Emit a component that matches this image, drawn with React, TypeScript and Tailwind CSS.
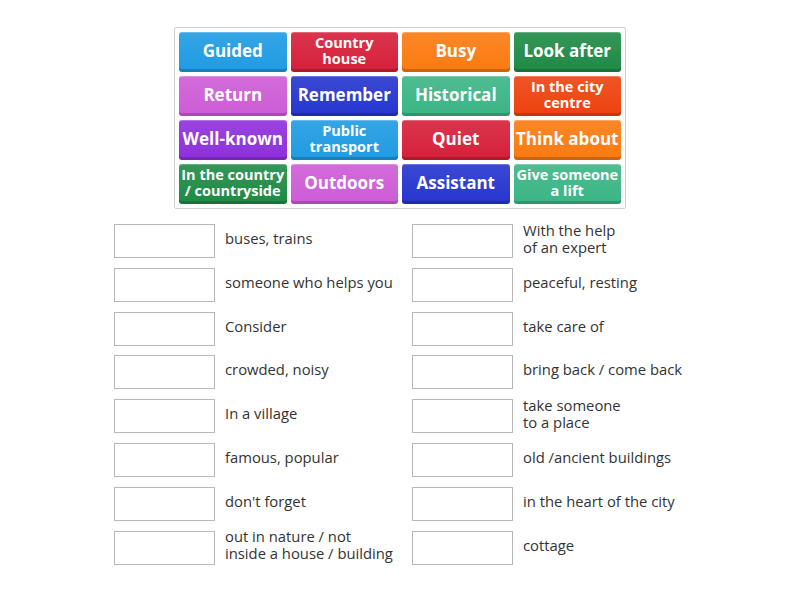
import React from "react";

type Tile = { label: string[]; bg: string };

const tiles: Tile[] = [
  { label: ["Guided"], bg: "bg-[#1f9be3]" },
  { label: ["Country", "house"], bg: "bg-[#d61f3a]" },
  { label: ["Busy"], bg: "bg-[#fb7a10]" },
  { label: ["Look after"], bg: "bg-[#1e8a46]" },
  { label: ["Return"], bg: "bg-[#cd5cd6]" },
  { label: ["Remember"], bg: "bg-[#2535cf]" },
  { label: ["Historical"], bg: "bg-[#3bb585]" },
  { label: ["In the city", "centre"], bg: "bg-[#ee420f]" },
  { label: ["Well-known"], bg: "bg-[#8e2fdc]" },
  { label: ["Public", "transport"], bg: "bg-[#1f9be3]" },
  { label: ["Quiet"], bg: "bg-[#d61f3a]" },
  { label: ["Think about"], bg: "bg-[#fb7a10]" },
  { label: ["In the country", "/ countryside"], bg: "bg-[#1e8a46]" },
  { label: ["Outdoors"], bg: "bg-[#cd5cd6]" },
  { label: ["Assistant"], bg: "bg-[#2535cf]" },
  { label: ["Give someone", "a lift"], bg: "bg-[#3bb585]" },
];

const left: string[][] = [
  ["buses, trains"],
  ["someone who helps you"],
  ["Consider"],
  ["crowded, noisy"],
  ["In a village"],
  ["famous, popular"],
  ["don't forget"],
  ["out in nature / not", "inside a house / building"],
];

const right: string[][] = [
  ["With the help", "of an expert"],
  ["peaceful, resting"],
  ["take care of"],
  ["bring back / come back"],
  ["take someone", "to a place"],
  ["old /ancient buildings"],
  ["in the heart of the city"],
  ["cottage"],
];

function TileBox({ t }: { t: Tile }) {
  const two = t.label.length > 1;
  return (
    <div
      className={`${t.bg} relative h-[40px] rounded-[3px] flex flex-col items-center justify-center text-white font-bold text-center overflow-hidden shadow-[inset_0_-3px_0_rgba(0,0,0,0.18),inset_0_1px_0_rgba(255,255,255,0.25)] ${
        two ? "text-[14.5px] leading-[16px] pb-[3px]" : "text-[17px] leading-[20px] pb-[2px]"
      }`}
    >
      <div className="absolute inset-0 bg-gradient-to-b from-white/10 to-transparent pointer-events-none" />
      {t.label.map((l, i) => (
        <span key={i} className="relative whitespace-nowrap">
          {l}
        </span>
      ))}
    </div>
  );
}

function Row({ text }: { text: string[] }) {
  return (
    <div className="flex items-center h-[34px]">
      <div className="w-[101px] h-[34px] border border-[#b8b8b8] bg-white shrink-0" />
      <div className="ml-[10px] pb-[5px] text-[14.8px] leading-[17px] text-[#333]">
        {text.map((l, i) => (
          <div key={i} className="whitespace-nowrap">
            {l}
          </div>
        ))}
      </div>
    </div>
  );
}

export default function App() {
  return (
    <div
      className="w-[800px] h-[600px] bg-white relative"
      style={{ fontFamily: '"Open Sans", "Noto Sans", sans-serif' }}
    >
      <div className="pt-[27px] flex justify-center">
        <div className="w-[452px] border border-[#cfcfcf] rounded-[2px] p-[4px] grid grid-cols-4 gap-[4px]">
          {tiles.map((t, i) => (
            <TileBox key={i} t={t} />
          ))}
        </div>
      </div>
      <div className="mt-[15px] pl-[114px] flex gap-[97px]">
        <div className="flex flex-col gap-[9.8px] w-[201px]">
          {left.map((t, i) => (
            <Row key={i} text={t} />
          ))}
        </div>
        <div className="flex flex-col gap-[9.8px]">
          {right.map((t, i) => (
            <Row key={i} text={t} />
          ))}
        </div>
      </div>
    </div>
  );
}
